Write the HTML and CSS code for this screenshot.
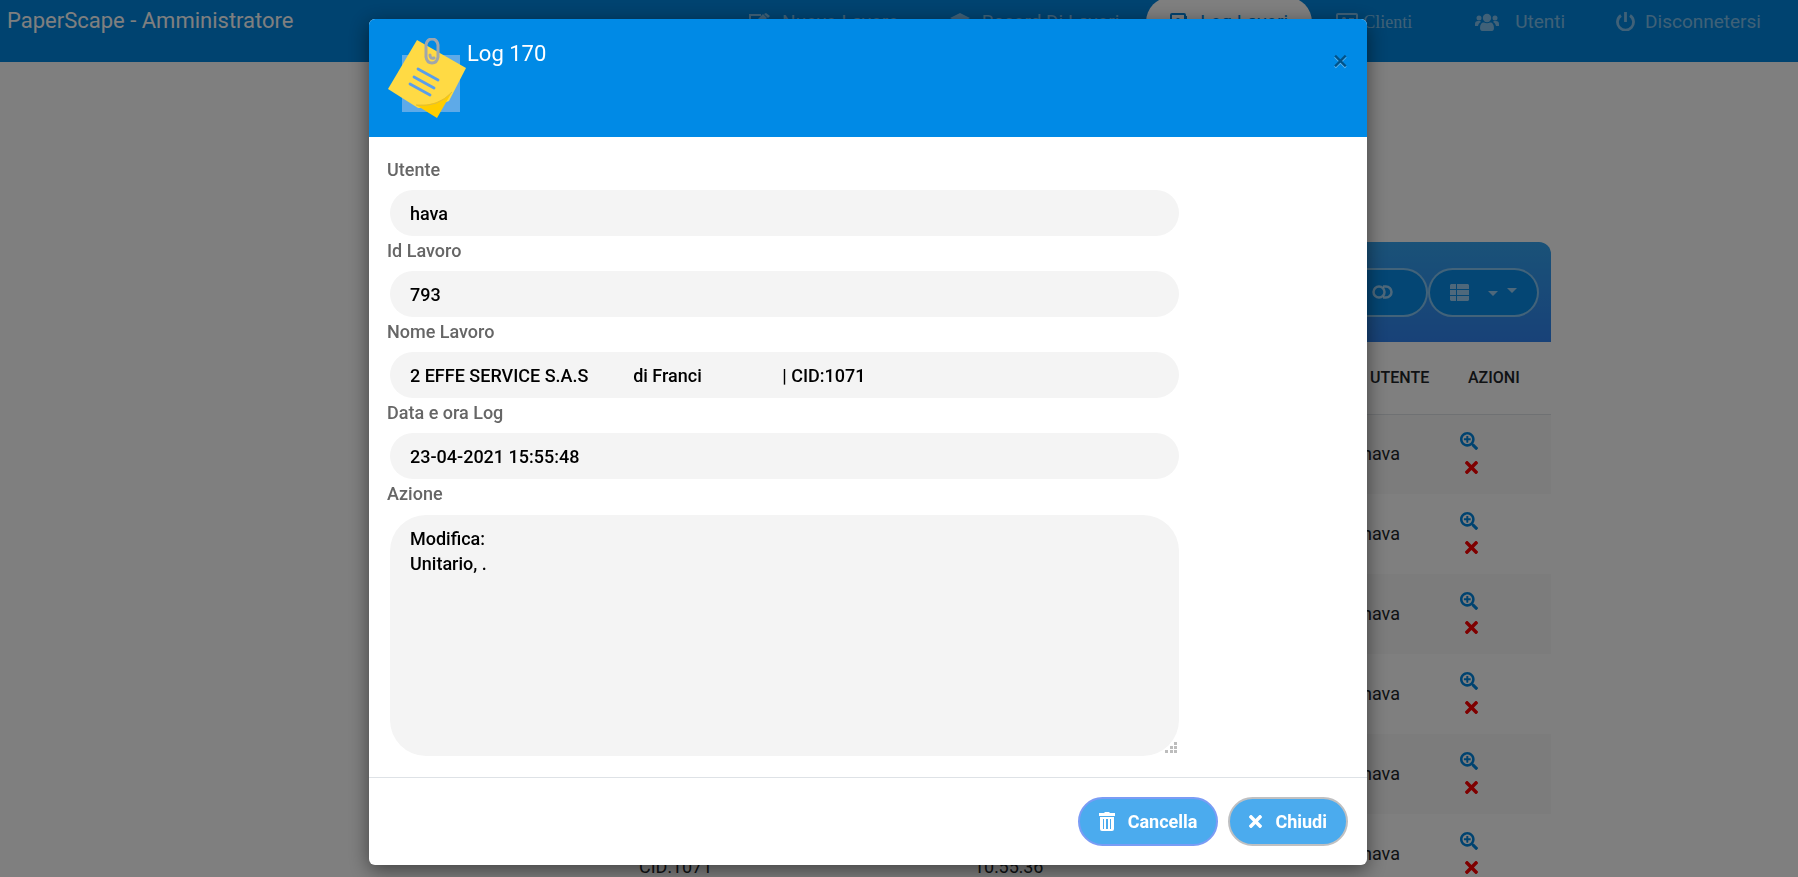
FILE: index.html
```html
<!DOCTYPE html>
<html lang="it">
<head>
  <meta charset="UTF-8">
  <meta name="viewport" content="width=device-width, initial-scale=1.0">
  <title>PaperScape - Amministratore</title>
  <link rel="stylesheet" href="styles.css">
</head>
<body>
  <!-- Shared icons -->
  <svg class="sprite" aria-hidden="true">
    <symbol id="i-zoom" viewBox="0 0 512 512"><path d="M304 192v32c0 6.600-5.400 12-12 12h-56v56c0 6.600-5.400 12-12 12h-32c-6.600 0-12-5.400-12-12v-56h-56c-6.600 0-12-5.400-12-12v-32c0-6.600 5.400-12 12-12h56v-56c0-6.600 5.400-12 12-12h32c6.600 0 12 5.400 12 12v56h56c6.600 0 12 5.400 12 12zm201 284.700L476.700 505c-9.400 9.400-24.600 9.400-33.900 0L343 405.300c-4.500-4.500-7-10.600-7-17V372c-35.300 27.600-79.700 44-128 44C93.100 416 0 322.900 0 208S93.100 0 208 0s208 93.100 208 208c0 48.300-16.400 92.700-44 128h16.300c6.400 0 12.500 2.500 17 7l99.700 99.700c9.300 9.400 9.300 24.600 0 34zM344 208c0-75.200-60.800-136-136-136S72 132.800 72 208s60.800 136 136 136 136-60.800 136-136z"/></symbol>
    <symbol id="i-times" viewBox="0 80 352 352"><path d="M242.700 256l100.100-100.100c12.300-12.300 12.300-32.200 0-44.500l-22.200-22.200c-12.300-12.300-32.200-12.300-44.500 0L176 189.300 75.900 89.200c-12.300-12.300-32.200-12.300-44.500 0L9.200 111.500c-12.300 12.300-12.300 32.200 0 44.500L109.300 256 9.200 356.100c-12.300 12.300-12.300 32.200 0 44.500l22.200 22.200c12.300 12.300 32.200 12.300 44.500 0L176 322.700l100.100 100.100c12.300 12.300 32.200 12.300 44.500 0l22.200-22.200c12.300-12.300 12.300-32.200 0-44.500L242.700 256z"/></symbol>
  </svg>

  <header class="navbar">
    <a class="brand" href="#">PaperScape - Amministratore</a>
    <nav class="menu">
      <a class="menu-link" href="#">
        <svg width="22" height="18" viewBox="0 0 22 18" fill="none" stroke="currentColor" stroke-width="2"><path d="M13 2H2v14h14v-5"/><path d="M8 8l7-7 4 4-7 7-4 1z" fill="currentColor" stroke="none"/><path d="M16 1l2-1 4 3-2 2z" fill="currentColor" stroke="none"/></svg>
        Nuovo Lavoro
      </a>
      <a class="menu-link" href="#">
        <svg width="20" height="18" viewBox="0 0 20 18" fill="currentColor"><path d="M10 0l10 5-10 5L0 5zM2 8l8 4 8-4 2 1-10 5L0 9zM2 12l8 4 8-4 2 1-10 5-10-5z"/></svg>
        Record Di Lavori
      </a>
      <a class="menu-link active" href="#">
        <svg width="18" height="18" viewBox="0 0 18 18" fill="currentColor"><path fill-rule="evenodd" d="M2 0h12a2 2 0 0 1 2 2v14a2 2 0 0 1-2 2H2a2 2 0 0 1-2-2V2a2 2 0 0 1 2-2zm0 2v14h12V2z"/><circle cx="8" cy="7" r="2"/><path d="M4 13c0-4 8-4 8 0zM16 3h1v3h-1zM16 8h1v3h-1z"/></svg>
        Log Lavori
      </a>
      <a class="menu-link clients" href="#">
        <svg width="22" height="18" viewBox="0 0 22 18" fill="currentColor"><path fill-rule="evenodd" d="M2 0h18a2 2 0 0 1 2 2v14a2 2 0 0 1-2 2H2a2 2 0 0 1-2-2V2a2 2 0 0 1 2-2zm0 2v14h18V2z"/><circle cx="8" cy="6" r="2"/><path d="M4 13c0-5 8-5 8 0zM13 5h5v2h-5zM13 9h5v1h-5z"/></svg>
        Clienti
      </a>
      <a class="menu-link users" href="#">
        <svg width="24" height="18" viewBox="0 0 24 18" fill="currentColor"><circle cx="12" cy="5" r="4.200"/><path d="M5 15c0-4 2-6 4-5.500 2 1 4 1 6 0 2-.5 4 1.500 4 5.500 0 2-1 3-2 3H7c-1 0-2-1-2-3z"/><circle cx="4" cy="5" r="2.500"/><circle cx="20" cy="5" r="2.500"/><path d="M0 13v-2c0-2 1-3 3-3h2l1 1c-2 1-2.500 2-3 4zM24 13v-2c0-2-1-3-3-3h-2l-1 1c2 1 2.500 2 3 4z"/></svg>
        Utenti
      </a>
      <a class="menu-link logout" href="#">
        <svg width="19" height="19" viewBox="0 0 19 19" fill="none" stroke="currentColor" stroke-width="2.800"><path d="M5 3.500a8 8 0 1 0 9 0M9.500 0v10"/></svg>
        Disconnetersi
      </a>
    </nav>
  </header>

  <main class="page">
    <section class="card">
      <div class="toolbar">
        <button class="tool" type="button" aria-label="Mostra formato a schede">
          <svg width="21" height="14" viewBox="0 0 21 14" fill="none" stroke="currentColor" stroke-width="2.500"><circle cx="7" cy="7" r="5.500"/><path d="M11 1.500h3a5.500 5.500 0 0 1 0 11h-3"/></svg>
        </button>
        <button class="tool columns" type="button" aria-label="Colonne">
          <svg width="19" height="17" viewBox="0 0 19 17" fill="currentColor"><path d="M1 0h5v5H0V1zM7 0h11l1 1v4H7zM0 6h6v5H0zM7 6h12v5H7zM0 12h6v5H1l-1-1zM7 12h12v4l-1 1H7z"/></svg>
          <svg width="29" height="8" viewBox="0 0 29 8" fill="currentColor"><path d="M0 3h10L5 8zM19 0h10l-5 5z"/></svg>
        </button>
      </div>
      <table class="logs">
        <colgroup>
          <col class="col-id"><col class="col-name"><col class="col-date"><col class="col-user"><col class="col-actions">
        </colgroup>
        <thead>
          <tr><th></th><th></th><th></th><th>UTENTE</th><th>AZIONI</th></tr>
        </thead>
        <tbody>
          <tr><td></td><td></td><td></td><td>hava</td><td><div class="actions"><a href="#" aria-label="Dettagli"><svg width="18" height="18"><use href="#i-zoom"/></svg></a><a class="remove" href="#" aria-label="Elimina"><svg width="13" height="13"><use href="#i-times"/></svg></a></div></td></tr>
          <tr><td></td><td></td><td></td><td>hava</td><td><div class="actions"><a href="#" aria-label="Dettagli"><svg width="18" height="18"><use href="#i-zoom"/></svg></a><a class="remove" href="#" aria-label="Elimina"><svg width="13" height="13"><use href="#i-times"/></svg></a></div></td></tr>
          <tr><td></td><td></td><td></td><td>hava</td><td><div class="actions"><a href="#" aria-label="Dettagli"><svg width="18" height="18"><use href="#i-zoom"/></svg></a><a class="remove" href="#" aria-label="Elimina"><svg width="13" height="13"><use href="#i-times"/></svg></a></div></td></tr>
          <tr><td></td><td></td><td></td><td>hava</td><td><div class="actions"><a href="#" aria-label="Dettagli"><svg width="18" height="18"><use href="#i-zoom"/></svg></a><a class="remove" href="#" aria-label="Elimina"><svg width="13" height="13"><use href="#i-times"/></svg></a></div></td></tr>
          <tr><td></td><td></td><td></td><td>hava</td><td><div class="actions"><a href="#" aria-label="Dettagli"><svg width="18" height="18"><use href="#i-zoom"/></svg></a><a class="remove" href="#" aria-label="Elimina"><svg width="13" height="13"><use href="#i-times"/></svg></a></div></td></tr>
          <tr><td></td><td><br>CID:1071</td><td><br>10:55:36</td><td>hava</td><td><div class="actions"><a href="#" aria-label="Dettagli"><svg width="18" height="18"><use href="#i-zoom"/></svg></a><a class="remove" href="#" aria-label="Elimina"><svg width="13" height="13"><use href="#i-times"/></svg></a></div></td></tr>
        </tbody>
      </table>
    </section>
  </main>

  <div class="backdrop">
    <div class="modal" role="dialog" aria-labelledby="modalTitle">
      <div class="modal-header">
        <svg width="80" height="80" viewBox="0 0 80 80">
          <path fill="#5eaae8" d="M15 17h58v57H15z"/>
          <path fill="#ffda44" d="M30 2l49 28-17 33-18 7-13 0L1 51z"/>
          <path fill="#ffcd00" d="M65 54l-15 26-21-13q22 1 36-13z"/>
          <path fill="none" stroke="#e0bd3c" d="M29 67q22 3 36-13"/>
          <path fill="none" stroke="#5a9eea" stroke-width="2.800" stroke-linecap="round" d="M31 31l20 11M27 39l20 11M23 46l20 11"/>
          <path fill="none" stroke="#a0a6ac" stroke-width="3" stroke-linecap="round" d="M39 15V7q1-6 6-6t6 6v12q-1 6-6 6t-6-6v-4M43 17q0 4 4 3"/>
        </svg>
        <h5 class="modal-title" id="modalTitle">Log 170</h5>
        <button class="close" type="button" aria-label="Chiudi finestra">×</button>
      </div>

      <form class="modal-body" id="logForm">
        <label for="utente">Utente</label>
        <input class="field" id="utente" type="text" value="hava" readonly>
        <label for="idLavoro">Id Lavoro</label>
        <input class="field" id="idLavoro" type="text" value="793" readonly>
        <label for="nomeLavoro">Nome Lavoro</label>
        <input class="field" id="nomeLavoro" type="text" value="2 EFFE SERVICE S.A.S          di Franci                  | CID:1071" readonly>
        <label for="dataLog">Data e ora Log</label>
        <input class="field" id="dataLog" type="text" value="23-04-2021 15:55:48" readonly>
        <label for="azione">Azione</label>
        <div class="area">
          <textarea class="field" id="azione" readonly>Modifica:
Unitario, .</textarea>
          <svg class="grip" width="12" height="12" viewBox="0 0 12 12"><path d="M9 0h3v3H9zM5 4h3v3H5zM9 4h3v3H9zM0 8h3v3H0zM5 8h3v3H5zM9 8h3v3H9z"/></svg>
        </div>
      </form>

      <div class="modal-footer">
        <button class="btn btn-delete" type="button">
          <svg width="16" height="19" viewBox="0 0 16 19" fill="currentColor"><path fill-rule="evenodd" d="M5 1l1-1h4l1 1h5v3H0V1zM1 5h14v12a2 2 0 0 1-2 2H3a2 2 0 0 1-2-2zm3 2v10h1V7zm3 0v10h2V7zm4 0v10h1V7z"/></svg>
          Cancella
        </button>
        <button class="btn btn-close" type="button">
          <svg width="13" height="13"><use href="#i-times"/></svg>
          Chiudi
        </button>
      </div>
    </div>
  </div>
</body>
</html>
```
FILE: styles.css
```css
* {
  box-sizing: border-box;
}
body {
  margin: 0;
  height: 100vh;
  overflow: hidden;
  background: #fff;
  color: #212529;
  font-family: Roboto, "Liberation Sans", sans-serif;
  font-size: 18px;
  line-height: 26px;
}
a {
  text-decoration: none;
}
svg {
  flex: none;
  fill: currentColor;
}
svg[fill="none"] {
  fill: none;
}
.sprite {
  position: absolute;
  width: 0;
  height: 0;
}

/* Top bar */
.navbar {
  display: flex;
  justify-content: space-between;
  height: 62px;
  padding: 0 13px 0 7px;
  background: #0086e0;
}
.brand {
  padding-top: 8px;
  color: #fff;
  font-size: 22px;
}
.menu {
  display: flex;
  gap: 3px;
}
.menu-link {
  display: flex;
  align-items: center;
  gap: 12px;
  height: 43px;
  padding: 0 24px;
  color: rgba(255, 255, 255, 0.5);
  font-size: 19px;
  white-space: nowrap;
}
.menu-link.active {
  height: 50px;
  margin-top: -3px;
  border-radius: 25px;
  background: #fff;
  color: #0086e0;
}
.menu-link.clients {
  gap: 5px;
  margin-left: -3px;
  font-family: "Liberation Serif", serif;
  font-size: 18px;
}
.menu-link.users {
  gap: 16px;
  margin-left: 12px;
}
.menu-link.logout {
  gap: 10px;
}

/* Log table */
.page {
  padding: 180px 247px 0 411px;
}
.toolbar {
  display: flex;
  justify-content: flex-end;
  align-items: center;
  height: 100px;
  padding-right: 12px;
  border-radius: 12px 12px 0 0;
  background: linear-gradient(#34a4f0, #3084f0);
}
.tool {
  display: flex;
  align-items: center;
  gap: 19px;
  height: 49px;
  padding: 0 33px;
  border: 2px solid rgba(255, 255, 255, 0.5);
  border-radius: 25px;
  background: #088ce8;
  color: rgba(255, 255, 255, 0.6);
}
.tool.columns {
  padding: 0 20px;
}
.logs {
  width: 100%;
  table-layout: fixed;
  border-collapse: collapse;
}
.col-id { width: 221px; }
.col-name { width: 335px; }
.col-date { width: auto; }
.col-user { width: 98px; }
.col-actions { width: 98px; }
.logs th {
  height: 72px;
  padding: 0 0 0 15px;
  border-bottom: 1px solid #dee2e6;
  font-size: 16px;
  font-weight: 500;
  text-align: left;
}
.logs td {
  height: 80px;
  padding: 0 0 0 7px;
}
.logs tbody tr:nth-child(odd) {
  background: #f8f8f8;
}
.logs tbody tr:nth-child(even) {
  background: #fff;
}
.actions {
  display: flex;
  flex-direction: column;
}
.actions a {
  display: flex;
  align-items: center;
  height: 26px;
  color: #0086e0;
}
.actions .remove {
  padding-left: 5px;
  color: #f00;
}

/* Modal */
.backdrop {
  position: fixed;
  inset: 0;
  display: flex;
  justify-content: center;
  align-items: flex-start;
  padding: 19px 62px 0 0;
  background: rgba(0, 0, 0, 0.5);
}
.modal {
  width: 100%;
  max-width: 998px;
  overflow: hidden;
  border-radius: 6px;
  background: #fff;
  box-shadow: 0 5px 20px rgba(0, 0, 0, 0.5);
}
.modal-header {
  display: flex;
  align-items: flex-start;
  padding: 19px 19px 19px 18px;
  background: #008ae6;
  color: #fff;
}
.modal-title {
  flex: 1;
  margin: 0;
  padding-top: 3px;
  font-size: 22px;
  font-weight: 400;
}
.close {
  padding: 10px 0;
  border: 0;
  background: none;
  color: #000;
  font: 400 28px/26px Roboto, sans-serif;
  text-shadow: 0 1px 0 #fff;
  opacity: 0.4;
}
.modal-body {
  padding: 18px 18px 21px;
}
.modal-body label {
  display: block;
  height: 35px;
  padding-top: 2px;
  color: #666;
  font-weight: 500;
}
.field {
  display: block;
  width: 82%;
  height: 46px;
  margin-left: 3px;
  padding: 0 20px;
  border: 0;
  border-radius: 23px;
  background: #f4f4f4;
  color: #000;
  font: inherit;
  font-weight: 500;
  white-space: pre;
}
.area {
  position: relative;
  width: 82%;
  margin: 1px 0 0 3px;
}
.area .field {
  width: 100%;
  height: 241px;
  margin: 0;
  padding: 11px 20px;
  border-radius: 36px;
  line-height: 25px;
  resize: none;
}
.grip {
  position: absolute;
  right: 2px;
  bottom: 2px;
  fill: #bdbdbd;
}
.modal-footer {
  display: flex;
  justify-content: flex-end;
  gap: 10px;
  padding: 19px;
  border-top: 1px solid #dee2e6;
}
.btn {
  display: flex;
  align-items: center;
  gap: 13px;
  height: 49px;
  padding: 0 19px;
  border: 2px solid #7a9cf5;
  border-radius: 25px;
  background: #4babee;
  color: #fff;
  font: inherit;
  font-weight: 700;
}
.btn-close {
  border-color: #bfc0c2;
}
```
